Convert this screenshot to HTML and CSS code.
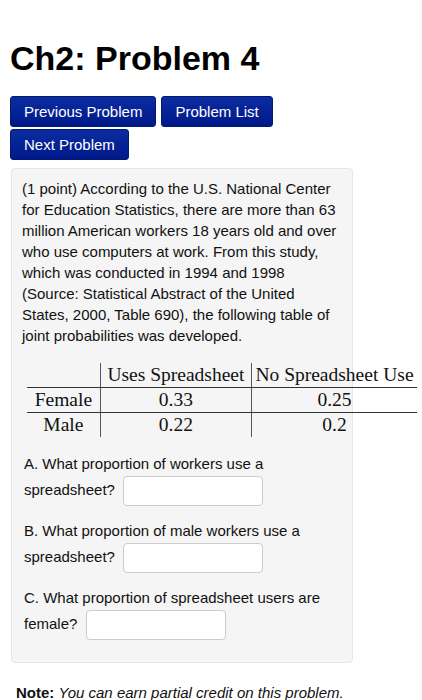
FILE: index.html
```html
<!DOCTYPE html>
<html>
<head>
<meta charset="utf-8">
<link rel="stylesheet" href="styles.css">
</head>
<body>
<h1 class="title">Ch2: Problem 4</h1>
<div class="nav">
  <a class="btn">Previous Problem</a>
  <a class="btn">Problem List</a>
  <a class="btn">Next Problem</a>
</div>
<div class="panel">
  <p class="intro">(1 point) According to the U.S. National Center for Education Statistics, there are more than 63 million American workers 18 years old and over who use computers at work. From this study, which was conducted in 1994 and 1998 (Source: Statistical Abstract of the United States, 2000, Table 690), the following table of joint probabilities was developed.</p>
  <table class="probs">
    <tr class="head"><td class="lab"></td><td class="c2">Uses Spreadsheet</td><td class="c3">No Spreadsheet Use</td></tr>
    <tr><td class="lab">Female</td><td class="c2">0.33</td><td class="c3">0.25</td></tr>
    <tr><td class="lab">Male</td><td class="c2">0.22</td><td class="c3">0.2</td></tr>
  </table>
  <div class="questions">
    <p class="q">A. What proportion of workers use a spreadsheet? <span class="inp"></span></p>
    <p class="q">B. What proportion of male workers use a spreadsheet? <span class="inp"></span></p>
    <p class="q">C. What proportion of spreadsheet users are female? <span class="inp"></span></p>
  </div>
</div>
<p class="note"><b>Note:</b> <i>You can earn partial credit on this problem.</i></p>
</body>
</html>
```
FILE: styles.css
```css
html, body { margin: 0; padding: 0; background: #fff; }
body { font-family: "Liberation Sans", Arial, sans-serif; color: #111; padding: 0 10px; width: 422px; box-sizing: border-box; }
.title { font-size: 34px; font-weight: bold; margin: 0; padding-top: 38px; line-height: 40px; color: #000; }
.nav { display: flex; flex-wrap: wrap; gap: 2px 5px; margin-top: 18px; width: 270px; }
.btn { display: block; white-space: nowrap; height: 31px; line-height: 29px; padding: 0 13px; font-size: 15px; color: #fff; border-radius: 3px; background: linear-gradient(#0b2ca0, #00198a); border: 1px solid #021a6e; box-sizing: border-box; }
.panel { margin-top: 8px; margin-left: 1px; width: 342px; box-sizing: border-box; background: #f5f5f5; border: 1px solid #e6e6e6; border-radius: 4px; padding: 9px 10px 24px 10px; }
.intro { margin: 0; font-size: 15px; line-height: 21px; color: #111; }
.probs { border-collapse: collapse; margin: 17px 0 0 5px; font-family: "Liberation Serif", "Times New Roman", serif; font-size: 19.5px; width: 390px; position: relative; color: #111; }
.probs td { padding: 0; height: 24px; line-height: 24px; text-align: center; }
.probs .lab { width: 73px; border-right: 1px solid #555; }
.probs .c2 { width: 151px; border-right: 1px solid #555; }
.probs .c3 { width: 166px; }
.probs .head td { border-bottom: 1px solid #333; }
.probs tr:nth-child(2) td { border-bottom: 1px solid #333; }
.questions { margin-top: 14px; display: flex; flex-direction: column; gap: 14px; }
.q { margin: 0 0 0 2px; font-size: 15px; line-height: 26px; }
.inp { display: inline-block; width: 140px; height: 30px; margin: -2px 0 -2px 4px; box-sizing: border-box; background: #fff; border: 1px solid #ccc; border-radius: 4px; vertical-align: middle; }
.note { margin: 21px 0 0 6px; font-size: 15px; }
```
